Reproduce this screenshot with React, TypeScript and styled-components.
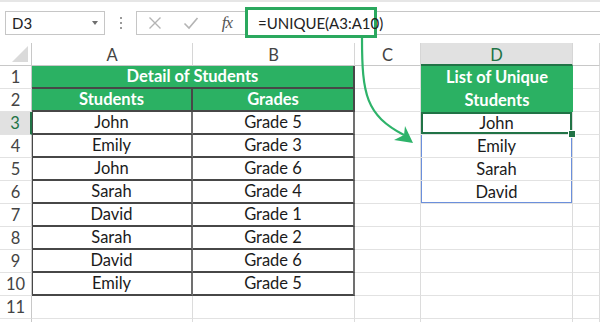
import React from 'react'
import styled, { createGlobalStyle, css } from 'styled-components'

const GREEN = '#2bb163'
const SELECTED = '#217346'
const SPILL = '#6b8fdc'
const RULE = '#474747'
const GRID = '#dcdcdc'

// column E only shows its left edge in the window, so its letter is out of view
const COLUMNS = ['A', 'B', 'C', 'D', '']
const ACTIVE_COLUMN = 'D'
const ACTIVE_ROW = 3

const students: [string, string][] = [
  ['John', 'Grade 5'],
  ['Emily', 'Grade 3'],
  ['John', 'Grade 6'],
  ['Sarah', 'Grade 4'],
  ['David', 'Grade 1'],
  ['Sarah', 'Grade 2'],
  ['David', 'Grade 6'],
  ['Emily', 'Grade 5'],
]

const uniqueStudents = ['John', 'Emily', 'Sarah', 'David']

const GlobalStyle = createGlobalStyle`
  html, body {
    margin: 0;
    padding: 0;
    background: #ffffff;
    overflow: hidden;
  }
  body {
    font-family: Lato, "Open Sans", sans-serif;
    color: #1b1b1b;
  }
  * {
    box-sizing: border-box;
  }
`

const Window = styled.div`
  position: relative;
  width: 600px;
  height: 322px;
  overflow: hidden;
  background: #ffffff;
`

const FormulaBar = styled.div`
  display: flex;
  align-items: center;
  height: 43px;
  padding-left: 5px;
  border-top: 2px solid #e6e6e6;
`

const NameBox = styled.div`
  display: flex;
  align-items: center;
  justify-content: space-between;
  width: 100px;
  height: 24px;
  padding: 0 6px 0 6px;
  border: 1px solid #c6c6c6;
  font-size: 15px;
  color: #222;
`

const DropCaret = styled.span`
  width: 0;
  height: 0;
  border-left: 3.5px solid transparent;
  border-right: 3.5px solid transparent;
  border-top: 4px solid #6f6f6f;
`

const Grip = styled.div`
  display: flex;
  flex-direction: column;
  align-items: center;
  justify-content: center;
  gap: 3px;
  width: 31px;

  span {
    width: 2px;
    height: 2px;
    background: #9a9a9a;
  }
`

const FormulaBox = styled.div`
  display: flex;
  align-items: center;
  flex: 1;
  height: 24px;
  border: 1px solid #c6c6c6;
  border-right: none;
`

const BarButton = styled.div`
  display: flex;
  align-items: center;
  justify-content: center;
  width: 36px;
  height: 100%;
  color: #b4b4b4;
`

const FxLabel = styled.span`
  font-family: "Liberation Serif", serif;
  font-style: italic;
  font-size: 17px;
  color: #555;
  letter-spacing: -1px;
`

const FormulaInput = styled.div`
  display: flex;
  align-items: center;
  align-self: center;
  width: 132px;
  height: 31px;
  padding-left: 10px;
  border: 3px solid #2aa85e;
  font-size: 15px;
  color: #222;
  background: #fff;
  white-space: nowrap;
`

const Sheet = styled.div`
  display: grid;
  grid-template-columns: 32px 161px 162px 66px 152px 1fr;
  grid-auto-rows: 23px;
`

const Corner = styled.div`
  position: relative;
  border-right: 1px solid #c8c8c8;
  border-bottom: 1px solid #c8c8c8;

  &::after {
    content: '';
    position: absolute;
    right: 3px;
    bottom: 3px;
    width: 0;
    height: 0;
    border-left: 16px solid transparent;
    border-bottom: 16px solid #dadada;
  }
`

const ColumnHeader = styled.div<{ $selected?: boolean }>`
  display: flex;
  align-items: center;
  justify-content: center;
  padding-top: 2px;
  font-size: 16.5px;
  color: #444;
  border-right: 1px solid #d6d6d6;
  border-bottom: 1px solid #c8c8c8;
  ${(p) =>
    p.$selected &&
    css`
      background: #e1e1e1;
      color: ${SELECTED};
      border-bottom: 2px solid ${SELECTED};
    `}
`

const RowHeader = styled.div<{ $selected?: boolean }>`
  display: flex;
  align-items: center;
  justify-content: center;
  font-size: 16.5px;
  color: #444;
  border-right: 1px solid #c8c8c8;
  border-bottom: 1px solid #e2e2e2;
  ${(p) =>
    p.$selected &&
    css`
      background: #e1e1e1;
      color: ${SELECTED};
      border-right: 2px solid ${SELECTED};
    `}
`

type Tone = 'plain' | 'head' | 'data'

const Cell = styled.div<{ $tone?: Tone; $first?: boolean; $rows?: number; $cols?: number }>`
  display: flex;
  align-items: center;
  justify-content: center;
  text-align: center;
  font-size: 16.5px;
  line-height: 23px;
  border-right: 1px solid ${GRID};
  border-bottom: 1px solid #e2e2e2;
  grid-row: span ${(p) => p.$rows ?? 1};
  grid-column: span ${(p) => p.$cols ?? 1};
  ${(p) =>
    p.$tone === 'head' &&
    css`
      background: ${GREEN};
      color: #fff;
      font-weight: 700;
    `}
  ${(p) =>
    (p.$tone === 'head' || p.$tone === 'data') &&
    css`
      border-right: 2px solid ${p.$tone === 'data' ? '#707070' : RULE};
      border-bottom: 2px solid ${RULE};
    `}
  ${(p) =>
    p.$first &&
    css`
      box-shadow: inset 1px 0 0 ${RULE};
    `}
`

// the spilled range of the UNIQUE result, D3:D6
const SpillCell = styled(Cell)<{ $top?: boolean; $bottom?: boolean; $active?: boolean }>`
  position: relative;
  box-shadow: inset 1px 0 0 ${SPILL}, inset -1px 0 0 ${SPILL}
    ${(p) => (p.$top ? `, inset 0 1px 0 ${SPILL}` : '')}
    ${(p) => (p.$bottom ? `, inset 0 -1px 0 ${SPILL}` : '')};
  ${(p) =>
    p.$active &&
    css`
      box-shadow: inset 0 0 0 2px ${SELECTED};
      z-index: 1;

      &::after {
        content: '';
        position: absolute;
        right: -4px;
        bottom: -4px;
        width: 6px;
        height: 6px;
        background: ${SELECTED};
        border: 1px solid #fff;
      }
    `}
`

const Callout = styled.svg`
  position: absolute;
  top: 0;
  left: 0;
  pointer-events: none;
`

function CrossIcon() {
  return (
    <svg width="14" height="14" viewBox="0 0 14 14">
      <path d="M1.5 1.5 L12.5 12.5 M12.5 1.5 L1.5 12.5" stroke="currentColor" strokeWidth="1.4" fill="none" />
    </svg>
  )
}

function CheckIcon() {
  return (
    <svg width="16" height="14" viewBox="0 0 16 14">
      <path d="M1.5 7.5 L6 12 L14.5 2" stroke="currentColor" strokeWidth="1.6" fill="none" />
    </svg>
  )
}

function FormulaRow() {
  return (
    <FormulaBar>
      <NameBox>
        <span>D3</span>
        <DropCaret />
      </NameBox>
      <Grip>
        <span />
        <span />
        <span />
      </Grip>
      <FormulaBox>
        <BarButton>
          <CrossIcon />
        </BarButton>
        <BarButton>
          <CheckIcon />
        </BarButton>
        <BarButton>
          <FxLabel>fx</FxLabel>
        </BarButton>
        <FormulaInput>=UNIQUE(A3:A10)</FormulaInput>
      </FormulaBox>
    </FormulaBar>
  )
}

function StudentRow({ row, name, grade }: { row: number; name: string; grade: string }) {
  const index = row - 3
  const unique = uniqueStudents[index]
  return (
    <>
      <RowHeader $selected={row === ACTIVE_ROW}>{row}</RowHeader>
      <Cell $tone="data" $first>
        {name}
      </Cell>
      <Cell $tone="data">{grade}</Cell>
      <Cell />
      {unique !== undefined ? (
        <SpillCell $top={index === 0} $bottom={index === uniqueStudents.length - 1} $active={row === ACTIVE_ROW}>
          {unique}
        </SpillCell>
      ) : (
        <Cell />
      )}
      <Cell />
    </>
  )
}

function EmptyRow({ label }: { label?: number }) {
  return (
    <>
      <RowHeader>{label}</RowHeader>
      <Cell />
      <Cell />
      <Cell />
      <Cell />
      <Cell />
    </>
  )
}

export default function App() {
  return (
    <Window>
      <GlobalStyle />
      <FormulaRow />
      <Sheet>
        <Corner />
        {COLUMNS.map((col, i) => (
          <ColumnHeader key={i} $selected={col === ACTIVE_COLUMN}>
            {col}
          </ColumnHeader>
        ))}

        <RowHeader>1</RowHeader>
        <Cell $tone="head" $cols={2}>
          Detail of Students
        </Cell>
        <Cell />
        <Cell $tone="head" $rows={2} style={{ border: 'none' }}>
          List of Unique
          <br />
          Students
        </Cell>
        <Cell />

        <RowHeader>2</RowHeader>
        <Cell $tone="head">Students</Cell>
        <Cell $tone="head">Grades</Cell>
        <Cell />
        <Cell />

        {students.map(([name, grade], i) => (
          <StudentRow key={i} row={i + 3} name={name} grade={grade} />
        ))}

        <EmptyRow label={11} />
        {/* only the top edge of row 12 shows in the window */}
        <EmptyRow />
      </Sheet>

      <Callout width="600" height="322" viewBox="0 0 600 322">
        <path d="M362 38 C362 95, 366 115, 404 135" stroke="#2eb36a" strokeWidth="2.2" fill="none" />
        <polygon points="413,143 394,140 404,135 405,126" fill="#2eb36a" />
      </Callout>
    </Window>
  )
}
